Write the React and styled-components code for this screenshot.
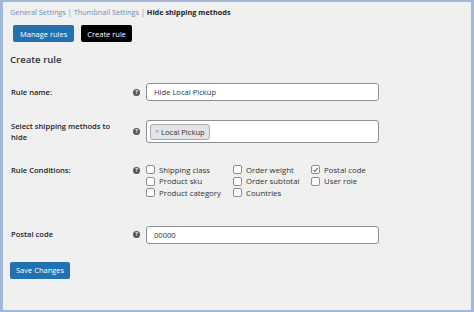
import React from "react";
import styled, { createGlobalStyle } from "styled-components";

const GlobalStyle = createGlobalStyle`
  html, body {
    margin: 0;
    padding: 0;
    background: #f0f0f1;
  }
  * {
    box-sizing: border-box;
  }
`;

const Frame = styled.div`
  width: 474px;
  height: 312px;
  border-style: solid;
  border-color: #a2b8d8;
  border-width: 2px 3px 2px 3px;
  background: #f0f0f1;
  padding: 4px 7px 0 7px;
  font-family: "Open Sans", "Noto Sans", sans-serif;
  color: #1d2327;
`;

const Breadcrumb = styled.div`
  font-size: 7.3px;
  line-height: 12px;
  color: #8c8f94;
  a {
    color: #6a8fb8;
    text-decoration: none;
  }
  strong {
    color: #1d2327;
    font-weight: 700;
  }
`;

const ButtonRow = styled.div`
  display: flex;
  gap: 7px;
  margin: 7px 0 0 3px;
`;

const Button = styled.button`
  height: 17px;
  padding: 0 7px;
  border: none;
  border-radius: 2px;
  font-family: inherit;
  font-size: 7.5px;
  color: #fff;
  background: ${(p) => (p.$dark ? "#000" : "#2271b1")};
  cursor: pointer;
  padding: 0 ${(p) => (p.$dark ? 6 : 7)}px;
`;

const Heading = styled.h2`
  margin: 11px 0 0 0;
  font-size: 9.6px;
  line-height: 14px;
  font-weight: 600;
  color: #2c3338;
`;

const Form = styled.div`
  margin-top: 16px;
  display: flex;
  flex-direction: column;
`;

const Row = styled.div`
  display: grid;
  grid-template-columns: 122px 13px 233px;
  align-items: ${(p) => (p.$top ? "start" : "center")};
  margin-bottom: ${(p) => p.$gap || 0}px;
  padding-left: 1px;
`;

const Label = styled.div`
  font-size: 7.6px;
  line-height: 11px;
  font-weight: 600;
  color: #1d2327;
  padding-top: ${(p) => p.$pt || 0}px;
`;

const Help = styled.span`
  width: 7px;
  height: 7px;
  border-radius: 50%;
  background: #50575e;
  color: #f0f0f1;
  font-size: 5.5px;
  font-weight: 700;
  line-height: 7px;
  text-align: center;
  margin-top: ${(p) => p.$mt || 0}px;
`;

const Input = styled.input`
  width: 233px;
  height: 18px;
  border: 1px solid #8c8f94;
  border-radius: 3px;
  background: #fff;
  padding: 0 7px;
  font-family: inherit;
  font-size: 7.6px;
  color: #2c3338;
  outline: none;
`;

const MultiSelect = styled.div`
  width: 233px;
  height: 23px;
  border: 1px solid #8c8f94;
  border-radius: 3px;
  background: #fff;
  display: flex;
  align-items: center;
  padding: 0 3px;
`;

const Tag = styled.span`
  display: inline-flex;
  align-items: center;
  gap: 2px;
  height: 16px;
  padding: 0 4px;
  background: #e4e4e4;
  border: 1px solid #aaa;
  border-radius: 3px;
  font-size: 7.6px;
  color: #2c3338;
  span {
    color: #999;
    font-size: 7px;
  }
`;

const CheckGrid = styled.div`
  display: grid;
  grid-template-columns: 87px 78px 70px;
  row-gap: 2px;
  padding-top: 1px;
`;

const Check = styled.label`
  display: flex;
  align-items: center;
  gap: 4px;
  height: 9.5px;
  font-size: 7.8px;
  color: #2c3338;
`;

const Box = styled.span`
  width: 9px;
  height: 9px;
  border: 1px solid #8c8f94;
  border-radius: 2px;
  background: #fff;
  display: inline-flex;
  align-items: center;
  justify-content: center;
  flex-shrink: 0;
`;

const Submit = styled(Button)`
  margin-top: 18px;
  height: 17px;
  padding: 0 6px;
`;

const conditions = [
  ["Shipping class", false],
  ["Order weight", false],
  ["Postal code", true],
  ["Product sku", false],
  ["Order subtotal", false],
  ["User role", false],
  ["Product category", false],
  ["Countries", false],
];

export default function App() {
  return (
    <>
      <GlobalStyle />
      <Frame>
        <Breadcrumb>
          <a href="#">General Settings</a> | <a href="#">Thumbnail Settings</a> |{" "}
          <strong>Hide shipping methods</strong>
        </Breadcrumb>
        <ButtonRow>
          <Button>Manage rules</Button>
          <Button $dark>Create rule</Button>
        </ButtonRow>
        <Heading>Create rule</Heading>
        <Form>
          <Row $gap={19}>
            <Label>Rule name:</Label>
            <Help>?</Help>
            <Input defaultValue="Hide Local Pickup" />
          </Row>
          <Row $gap={21}>
            <Label>
              Select shipping methods to
              <br />
              hide
            </Label>
            <Help>?</Help>
            <MultiSelect>
              <Tag>
                <span>×</span>Local Pickup
              </Tag>
            </MultiSelect>
          </Row>
          <Row $top $gap={28}>
            <Label $pt={1}>Rule Conditions:</Label>
            <Help $mt={3}>?</Help>
            <CheckGrid>
              {conditions.map(([name, on]) => (
                <Check key={name}>
                  <Box>
                    {on && (
                      <svg width="8" height="8" viewBox="0 0 8 8">
                        <path
                          d="M1.6 4.2 L3.2 5.8 L6.5 1.8"
                          fill="none"
                          stroke="#2271b1"
                          strokeWidth="1.2"
                        />
                      </svg>
                    )}
                  </Box>
                  {name}
                </Check>
              ))}
            </CheckGrid>
          </Row>
          <Row>
            <Label>Postal code</Label>
            <Help>?</Help>
            <Input defaultValue="00000" />
          </Row>
        </Form>
        <Submit>Save Changes</Submit>
      </Frame>
    </>
  );
}
